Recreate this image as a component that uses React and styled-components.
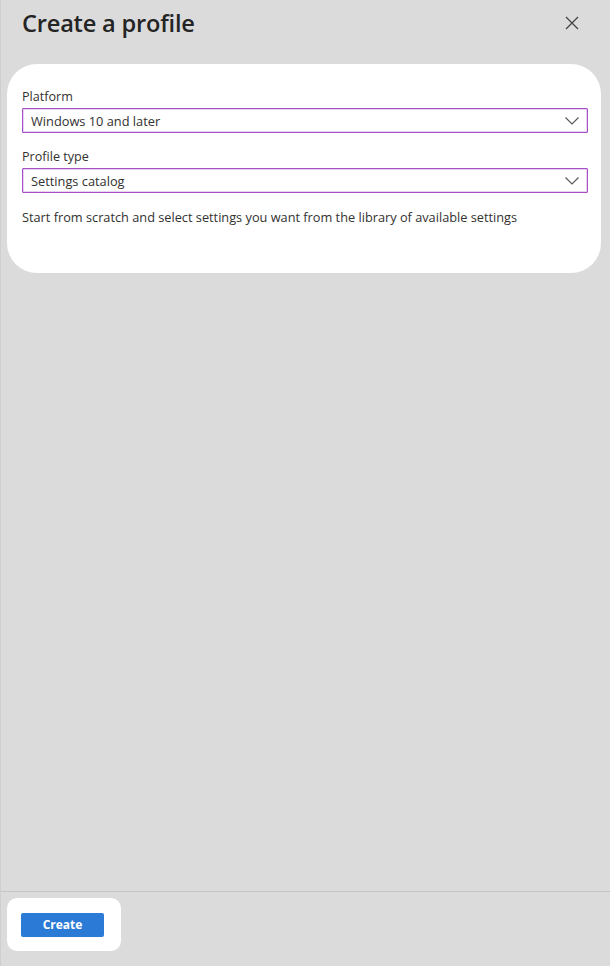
import React from 'react'
import styled, { createGlobalStyle } from 'styled-components';

const GlobalStyle = createGlobalStyle`
  html, body {
    margin: 0;
    padding: 0;
    background: #dbdbdb;
  }
  * {
    box-sizing: border-box;
  }
`;

const Panel = styled.div`
  width: 610px;
  height: 966px;
  display: flex;
  flex-direction: column;
  background: #dbdbdb;
  border-left: 1px solid #cfcfcf;
  font-family: "Open Sans", "Noto Sans", sans-serif;
  color: #323130;
`;

const Header = styled.div`
  display: flex;
  align-items: center;
  justify-content: space-between;
  height: 46px;
  padding: 0 28px 0 21px;
`;

const Title = styled.h1`
  margin: 0;
  font-size: 23.6px;
  font-weight: 600;
  letter-spacing: -0.2px;
  color: #242424;
`;

const CloseButton = styled.button`
  display: flex;
  align-items: center;
  justify-content: center;
  width: 20px;
  height: 20px;
  padding: 0;
  border: none;
  background: transparent;
  cursor: pointer;
  color: #444;
`;

const Card = styled.div`
  margin: 18px 9px 0 6px;
  height: 209px;
  padding: 24px 13px 0 15px;
  background: #fff;
  border-radius: 30px;
`;

const Field = styled.div`
  display: flex;
  flex-direction: column;
  margin-bottom: ${({ last }) => (last ? '15px' : '15px')};
`;

const Label = styled.label`
  font-size: 12.6px;
  line-height: 18px;
  color: #323130;
  margin-bottom: 2px;
`;

const Select = styled.div`
  display: flex;
  align-items: center;
  justify-content: space-between;
  height: 25px;
  padding: 1px 8px 0 8px;
  border: 1px solid #a64fc7;
  box-shadow: inset 0 0 0 0.5px rgba(166, 79, 199, 0.5);
  border-radius: 1px;
  font-size: 12.8px;
  color: #323130;
`;

const Description = styled.p`
  margin: 0;
  font-size: 12.75px;
  line-height: 18px;
  color: #323130;
`;

const Spacer = styled.div`
  flex: 1;
`;

const Footer = styled.div`
  border-top: 1px solid #c5c5c5;
  padding: 6px 0 15px 6px;
`;

const ButtonBox = styled.div`
  width: 114px;
  height: 53px;
  display: flex;
  align-items: center;
  padding-left: 14px;
  background: #fff;
  border-radius: 10px;
`;

const PrimaryButton = styled.button`
  width: 83px;
  height: 24px;
  border: none;
  border-radius: 2px;
  background: #2b7bd6;
  color: #fff;
  font-family: "Open Sans", "Noto Sans", sans-serif;
  font-size: 12px;
  font-weight: 700;
  cursor: pointer;
`;

const Chevron = () => (
  <svg width="14" height="8" viewBox="0 0 14 8" fill="none">
    <path d="M0.5 0.5 L7 7 L13.5 0.5" stroke="#555" strokeWidth="1.1" />
  </svg>
);

const CloseIcon = () => (
  <svg width="14" height="14" viewBox="0 0 14 14" fill="none">
    <path d="M1 1 L13 13 M13 1 L1 13" stroke="#444" strokeWidth="1.3" />
  </svg>
);

const App = () => {
  return (
    <>
      <GlobalStyle />
      <Panel>
        <Header>
          <Title>Create a profile</Title>
          <CloseButton aria-label="Close">
            <CloseIcon />
          </CloseButton>
        </Header>
        <Card>
          <Field>
            <Label>Platform</Label>
            <Select>
              <span>Windows 10 and later</span>
              <Chevron />
            </Select>
          </Field>
          <Field last>
            <Label>Profile type</Label>
            <Select>
              <span>Settings catalog</span>
              <Chevron />
            </Select>
          </Field>
          <Description>
            Start from scratch and select settings you want from the library of available settings
          </Description>
        </Card>
        <Spacer />
        <Footer>
          <ButtonBox>
            <PrimaryButton>Create</PrimaryButton>
          </ButtonBox>
        </Footer>
      </Panel>
    </>
  );
};

export default App
